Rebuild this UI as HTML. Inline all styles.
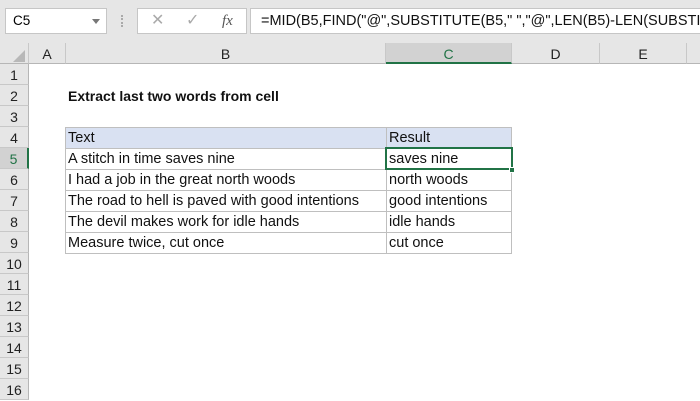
<!DOCTYPE html>
<html><head><style>
*{margin:0;padding:0;box-sizing:border-box}
body{width:700px;height:400px;overflow:hidden;background:#fff;font-family:"Liberation Sans",sans-serif;position:relative}
.a{position:absolute}
.tb{left:0;top:0;width:700px;height:43px;background:#e6e6e6}
.box{background:#fff;border:1px solid #c6c6c6}
.ch{top:43px;height:21px;background:#e6e6e6;border-right:1px solid #c8c8c8;border-bottom:1px solid #b6b6b6;font-size:14px;text-align:center;line-height:22px;color:#222}
.rh{left:0;width:29px;height:21px;background:#e6e6e6;border-bottom:1px solid #c8c8c8;border-right:1px solid #b6b6b6;font-size:14px;text-align:center;line-height:22px;color:#222}
.c{height:22px;border:1px solid #bfbfbf;font-size:14.5px;line-height:21px;padding-left:2px;color:#111;white-space:nowrap;overflow:hidden}
</style></head><body>
<div class="a tb"></div>
<div class="a box" style="left:5px;top:8px;width:102px;height:26px;font-size:13.5px;line-height:24px;padding-left:7px">C5<span class="a" style="right:6px;top:10px;border:4px solid transparent;border-top:5px solid #777"></span></div>
<div class="a" style="left:121px;top:15px;width:2px;height:12px;border-left:2px dotted #aaa"></div>
<div class="a box" style="left:137px;top:8px;width:110px;height:26px;color:#aaa;font-size:16px;line-height:24px">
<span class="a" style="left:13px">✕</span><span class="a" style="left:48px">✓</span><span class="a" style="left:84px;font-family:'Liberation Serif',serif;font-style:italic;color:#555;font-size:15px">fx</span></div>
<div class="a box" style="left:250px;top:8px;width:450px;height:26px;font-size:14.5px;line-height:24px;padding-left:10px;white-space:nowrap;overflow:hidden;border-right:none;color:#111">=MID(B5,FIND("@",SUBSTITUTE(B5," ","@",LEN(B5)-LEN(SUBSTITUTE(B5," ",""))-1))+1,100)</div>
<div class="a ch" style="left:0;width:29px"></div>
<div class="a" style="left:13px;top:50px;border-left:12px solid transparent;border-bottom:12px solid #b8b8b8"></div>
<div class="a ch" style="left:29px;width:37px">A</div>
<div class="a ch" style="left:66px;width:320px">B</div>
<div class="a ch" style="left:386px;width:126px;background:#d2d2d2;border-bottom:2px solid #217346;color:#217346">C</div>
<div class="a ch" style="left:512px;width:88px">D</div>
<div class="a ch" style="left:600px;width:87px">E</div>
<div class="a ch" style="left:687px;width:13px;border-right:none"></div>
<div class="a rh" style="top:64px">1</div><div class="a rh" style="top:85px">2</div><div class="a rh" style="top:106px">3</div><div class="a rh" style="top:127px">4</div>
<div class="a rh" style="top:148px;background:#d2d2d2;border-right:2px solid #217346;color:#217346">5</div>
<div class="a rh" style="top:169px">6</div><div class="a rh" style="top:190px">7</div><div class="a rh" style="top:211px">8</div><div class="a rh" style="top:232px">9</div><div class="a rh" style="top:253px">10</div><div class="a rh" style="top:274px">11</div><div class="a rh" style="top:295px">12</div><div class="a rh" style="top:316px">13</div><div class="a rh" style="top:337px">14</div><div class="a rh" style="top:358px">15</div><div class="a rh" style="top:379px">16</div>
<div class="a" style="left:68px;top:86px;height:21px;line-height:21px;font-size:14px;font-weight:bold;color:#111">Extract last two words from cell</div>
<div class="a c" style="left:65px;top:127px;width:322px;background:#d9e1f2">Text</div>
<div class="a c" style="left:386px;top:127px;width:126px;background:#d9e1f2">Result</div>
<div class="a c" style="left:65px;top:148px;width:322px">A stitch in time saves nine</div>
<div class="a c" style="left:386px;top:148px;width:126px">saves nine</div>
<div class="a c" style="left:65px;top:169px;width:322px">I had a job in the great north woods</div>
<div class="a c" style="left:386px;top:169px;width:126px">north woods</div>
<div class="a c" style="left:65px;top:190px;width:322px">The road to hell is paved with good intentions</div>
<div class="a c" style="left:386px;top:190px;width:126px">good intentions</div>
<div class="a c" style="left:65px;top:211px;width:322px">The devil makes work for idle hands</div>
<div class="a c" style="left:386px;top:211px;width:126px">idle hands</div>
<div class="a c" style="left:65px;top:232px;width:322px">Measure twice, cut once</div>
<div class="a c" style="left:386px;top:232px;width:126px">cut once</div>
<div class="a" style="left:385px;top:147px;width:128px;height:23px;border:2px solid #217346"></div>
<div class="a" style="left:509px;top:167px;width:6px;height:6px;background:#217346;border:1px solid #fff"></div>
</body></html>
